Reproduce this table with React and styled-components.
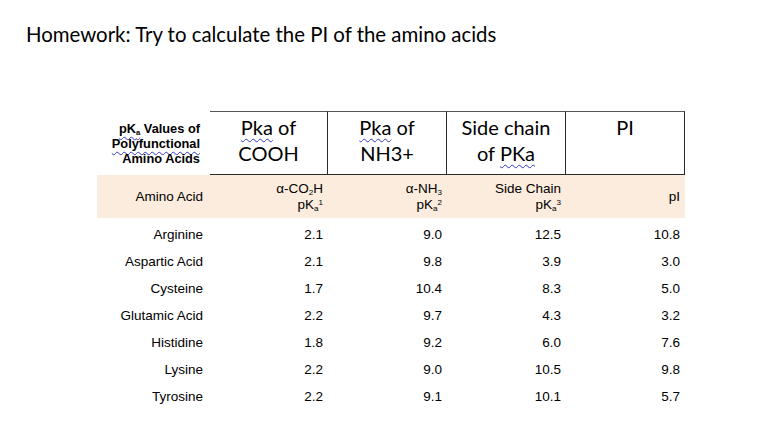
import React from 'react';
import styled, { createGlobalStyle } from 'styled-components';

const GlobalStyle = createGlobalStyle`
  html, body {
    margin: 0;
    padding: 0;
    background: #ffffff;
  }
  body {
    width: 770px;
    height: 432px;
    overflow: hidden;
  }
`;

const Slide = styled.div`
  width: 770px;
  height: 432px;
  box-sizing: border-box;
  padding: 21px 0 0 26px;
  color: #000;
`;

const Title = styled.h1`
  margin: 0;
  font-family: Lato, 'Open Sans', sans-serif;
  font-weight: 400;
  font-size: 20.4px;
  line-height: 26px;
`;

const Table = styled.div`
  margin: 64px 0 0 71px;
  width: 588px;
  display: grid;
  grid-template-columns: 113px 118px 119px 119px 119px;
  font-family: 'Liberation Sans', Arial, sans-serif;
`;

const Label = styled.div`
  display: flex;
  flex-direction: column;
  justify-content: center;
  align-items: flex-end;
  padding-right: 10px;
  font-weight: 700;
  font-size: 12.8px;
  line-height: 15px;
  text-align: right;
  height: 64px;
`;

const LabelLine = styled.span`
  display: block;
  height: 15px;
  white-space: nowrap;
`;

const HeadCell = styled.div`
  height: 64px;
  box-sizing: border-box;
  border-top: 1px solid #555;
  border-bottom: 1px solid #2a2a2a;
  border-right: 1px solid #2a2a2a;
  padding-top: 2px;
  text-align: center;
  font-family: Lato, 'Open Sans', sans-serif;
  font-size: 20px;
  line-height: 26px;
`;

const Wavy = styled.span`
  text-decoration: underline wavy #3535c8;
  text-decoration-thickness: 1px;
  text-underline-offset: 3px;
`;

const Band = styled.div`
  grid-column: 1 / -1;
  display: grid;
  grid-template-columns: subgrid;
  background: #fcecdd;
  height: 43px;
  align-items: center;
  font-size: 13.5px;
  line-height: 16px;
`;

const BandCell = styled.div`
  text-align: right;
  padding-right: ${({ $pad }) => $pad || 5}px;
`;

const Body = styled.div`
  grid-column: 1 / -1;
  display: grid;
  grid-template-columns: subgrid;
  padding-top: 3px;
`;

const Cell = styled.div`
  height: 27px;
  display: flex;
  align-items: center;
  justify-content: flex-end;
  padding-right: ${({ $pad }) => $pad || 5}px;
  font-size: 13.5px;
`;

const Sub = styled.sub`
  font-size: 0.6em;
  vertical-align: -0.25em;
  line-height: 0;
`;

const Sup = styled.sup`
  font-size: 0.6em;
  vertical-align: 0.45em;
  line-height: 0;
`;

const rows = [
  ['Arginine', '2.1', '9.0', '12.5', '10.8'],
  ['Aspartic Acid', '2.1', '9.8', '3.9', '3.0'],
  ['Cysteine', '1.7', '10.4', '8.3', '5.0'],
  ['Glutamic Acid', '2.2', '9.7', '4.3', '3.2'],
  ['Histidine', '1.8', '9.2', '6.0', '7.6'],
  ['Lysine', '2.2', '9.0', '10.5', '9.8'],
  ['Tyrosine', '2.2', '9.1', '10.1', '5.7'],
];

export default function App() {
  return (
    <>
      <GlobalStyle />
      <Slide>
        <Title>Homework: Try to calculate the PI of the amino acids</Title>
        <Table>
          <Label>
            <LabelLine><Wavy>pK<Sub>a</Sub></Wavy> Values of</LabelLine>
            <LabelLine><Wavy>Polyfunctional</Wavy></LabelLine>
            <LabelLine>Amino Acids</LabelLine>
          </Label>
          <HeadCell>
            <Wavy>Pka</Wavy> of<br />COOH
          </HeadCell>
          <HeadCell>
            <Wavy>Pka</Wavy> of<br />NH3+
          </HeadCell>
          <HeadCell>
            Side chain<br />of <Wavy>PKa</Wavy>
          </HeadCell>
          <HeadCell>PI</HeadCell>

          <Band>
            <BandCell $pad={7}>Amino Acid</BandCell>
            <BandCell>
              α-CO<Sub>2</Sub>H<br />pK<Sub>a</Sub><Sup>1</Sup>
            </BandCell>
            <BandCell>
              α-NH<Sub>3</Sub><br />pK<Sub>a</Sub><Sup>2</Sup>
            </BandCell>
            <BandCell>
              Side Chain<br />pK<Sub>a</Sub><Sup>3</Sup>
            </BandCell>
            <BandCell>pI</BandCell>
          </Band>

          <Body>
            {rows.map((row) =>
              row.map((v, i) => (
                <Cell key={row[0] + i} $pad={i === 0 ? 7 : 5}>
                  {v}
                </Cell>
              ))
            )}
          </Body>
        </Table>
      </Slide>
    </>
  );
}
